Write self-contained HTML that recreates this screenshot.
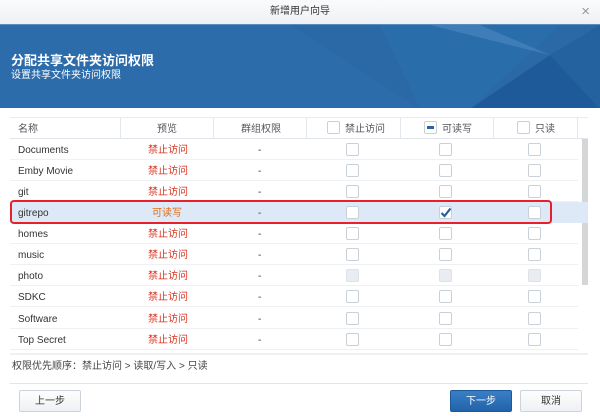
<!DOCTYPE html>
<html><head><meta charset="utf-8"><style>
*{margin:0;padding:0;box-sizing:border-box}
body{width:600px;height:416px;background:#fff;font-family:"Liberation Sans","Noto Sans CJK SC",sans-serif;font-size:10px;line-height:12px;color:#333;position:relative;overflow:hidden}
.abs{position:absolute}
.title{top:0;left:0;width:600px;height:24px;background:linear-gradient(#fafbfc,#eef1f4);text-align:center;line-height:24px;font-size:10px;color:#333}
.banner{top:24px;left:0;width:600px;height:84px;background:#2d6cab;overflow:hidden;border-top:1px solid #5a8cc0}
.cb{position:absolute;width:13px;height:13px;border:1px solid #c9d0d8;background:#fff;border-radius:2px}
.cb.dis{background:#e9edf1;border-color:#dde2e7}
.row{position:absolute;left:10px;width:568px;height:21px;border-bottom:1px solid #eef0f2}
.row span{position:absolute;top:2px;line-height:20px}
.hd{position:absolute;top:119px;line-height:21px;color:#555}
.red{color:#d9321f}
.btn{position:absolute;top:390px;height:22px;width:62px;border:1px solid #cdd3da;border-radius:2px;background:linear-gradient(#fdfdfd,#eef1f4);text-align:center;line-height:21px;font-size:10px}
</style></head><body>
<div class="abs title">新增用户向导<span style="position:absolute;right:10px;top:0;font-size:15px;color:#999">×</span></div>
<div class="abs banner">
<svg width="600" height="84" style="position:absolute;left:0;top:0">
<polygon points="290,0 600,0 600,84 420,84" fill="#2b68a6"/>
<polygon points="380,0 560,0 470,84 420,84" fill="#2a6fae" opacity=".7"/>
<polygon points="470,84 550,30 600,84" fill="#1e5a99"/>
<polygon points="430,0 480,0 550,30" fill="#4d88c0" opacity=".6"/>
<polygon points="550,30 600,0 600,84" fill="#23619f"/>
</svg>
<div style="position:absolute;left:11px;top:28px;color:#fff;font-size:13px;line-height:16px;font-weight:bold">分配共享文件夹访问权限</div>
<div style="position:absolute;left:11px;top:44px;color:#fff;font-size:10px;line-height:13px">设置共享文件夹访问权限</div>
</div>
<div class="abs" style="top:117px;left:10px;width:578px;height:22px;background:#fff;border-top:1px solid #e6ebf0;border-bottom:1px solid #dfe5eb"></div>
<div class="abs" style="top:118px;left:120px;width:1px;height:21px;background:#e3e8ee"></div>
<div class="abs" style="top:118px;left:213px;width:1px;height:21px;background:#e3e8ee"></div>
<div class="abs" style="top:118px;left:306px;width:1px;height:21px;background:#e3e8ee"></div>
<div class="abs" style="top:118px;left:400px;width:1px;height:21px;background:#e3e8ee"></div>
<div class="abs" style="top:118px;left:493px;width:1px;height:21px;background:#e3e8ee"></div>
<div class="abs" style="top:118px;left:577px;width:1px;height:21px;background:#e3e8ee"></div>
<div class="hd" style="left:18px">名称</div>
<div class="hd" style="left:157px">预览</div>
<div class="hd" style="left:241px">群组权限</div>
<div class="cb" style="left:327px;top:121px"></div><div class="hd" style="left:345px">禁止访问</div>
<div class="cb" style="left:424px;top:121px"><div style="position:absolute;left:2px;top:4px;width:7px;height:3px;background:#2a63a0"></div></div><div class="hd" style="left:442px">可读写</div>
<div class="cb" style="left:517px;top:121px"></div><div class="hd" style="left:535px">只读</div>
<div class="abs" style="top:139px;left:582px;width:6px;height:146px;background:#d4d6d8"></div>
<div class="abs" style="top:202px;left:10px;width:578px;height:21px;background:#dde9f7"></div>

<div class="row" style="top:139px"><span style="left:8px">Documents</span><span class="red" style="left:138px">禁止访问</span><span style="left:248px">-</span></div>
<div class="row" style="top:160px"><span style="left:8px">Emby Movie</span><span class="red" style="left:138px">禁止访问</span><span style="left:248px">-</span></div>
<div class="row" style="top:181px"><span style="left:8px">git</span><span class="red" style="left:138px">禁止访问</span><span style="left:248px">-</span></div>
<div class="row" style="top:202px;border-color:transparent"><span style="left:8px">gitrepo</span><span style="left:142px;color:#e06a1a">可读写</span><span style="left:248px">-</span></div>
<div class="row" style="top:223px"><span style="left:8px">homes</span><span class="red" style="left:138px">禁止访问</span><span style="left:248px">-</span></div>
<div class="row" style="top:244px"><span style="left:8px">music</span><span class="red" style="left:138px">禁止访问</span><span style="left:248px">-</span></div>
<div class="row" style="top:265px"><span style="left:8px">photo</span><span class="red" style="left:138px">禁止访问</span><span style="left:248px">-</span></div>
<div class="row" style="top:286px"><span style="left:8px">SDKC</span><span class="red" style="left:138px">禁止访问</span><span style="left:248px">-</span></div>
<div class="row" style="top:308px"><span style="left:8px">Software</span><span class="red" style="left:138px">禁止访问</span><span style="left:248px">-</span></div>
<div class="row" style="top:329px"><span style="left:8px">Top Secret</span><span class="red" style="left:138px">禁止访问</span><span style="left:248px">-</span></div>

<div class="cb" style="left:346px;top:143px"></div><div class="cb" style="left:439px;top:143px"></div><div class="cb" style="left:528px;top:143px"></div>
<div class="cb" style="left:346px;top:164px"></div><div class="cb" style="left:439px;top:164px"></div><div class="cb" style="left:528px;top:164px"></div>
<div class="cb" style="left:346px;top:185px"></div><div class="cb" style="left:439px;top:185px"></div><div class="cb" style="left:528px;top:185px"></div>
<div class="cb" style="left:346px;top:206px"></div><div class="cb" style="left:439px;top:206px"><svg width="13" height="13" style="position:absolute;left:-1px;top:-1px"><path d="M2.5 7 L5.5 10 L11.5 2.5" stroke="#2a5f98" stroke-width="2.2" fill="none"/></svg></div><div class="cb" style="left:528px;top:206px"></div>
<div class="cb" style="left:346px;top:227px"></div><div class="cb" style="left:439px;top:227px"></div><div class="cb" style="left:528px;top:227px"></div>
<div class="cb" style="left:346px;top:248px"></div><div class="cb" style="left:439px;top:248px"></div><div class="cb" style="left:528px;top:248px"></div>
<div class="cb dis" style="left:346px;top:269px"></div><div class="cb dis" style="left:439px;top:269px"></div><div class="cb dis" style="left:528px;top:269px"></div>
<div class="cb" style="left:346px;top:290px"></div><div class="cb" style="left:439px;top:290px"></div><div class="cb" style="left:528px;top:290px"></div>
<div class="cb" style="left:346px;top:312px"></div><div class="cb" style="left:439px;top:312px"></div><div class="cb" style="left:528px;top:312px"></div>
<div class="cb" style="left:346px;top:333px"></div><div class="cb" style="left:439px;top:333px"></div><div class="cb" style="left:528px;top:333px"></div>

<div class="abs" style="left:10px;top:200px;width:542px;height:24px;border:2px solid #e8202a;border-radius:4px"></div>
<div class="abs" style="left:10px;top:353px;width:578px;height:2px;background:#eef1f4"></div>
<div class="abs" style="left:12px;top:361px;color:#444">权限优先顺序：禁止访问 &gt; 读取/写入 &gt; 只读</div>
<div class="abs" style="left:10px;top:383px;width:578px;height:1px;background:#e1e5e9"></div>
<div class="btn" style="left:19px">上一步</div>
<div class="btn" style="left:450px;background:linear-gradient(#3a7fc6,#2263aa);border-color:#1d5a9c;color:#fff">下一步</div>
<div class="btn" style="left:520px">取消</div>
</body></html>
